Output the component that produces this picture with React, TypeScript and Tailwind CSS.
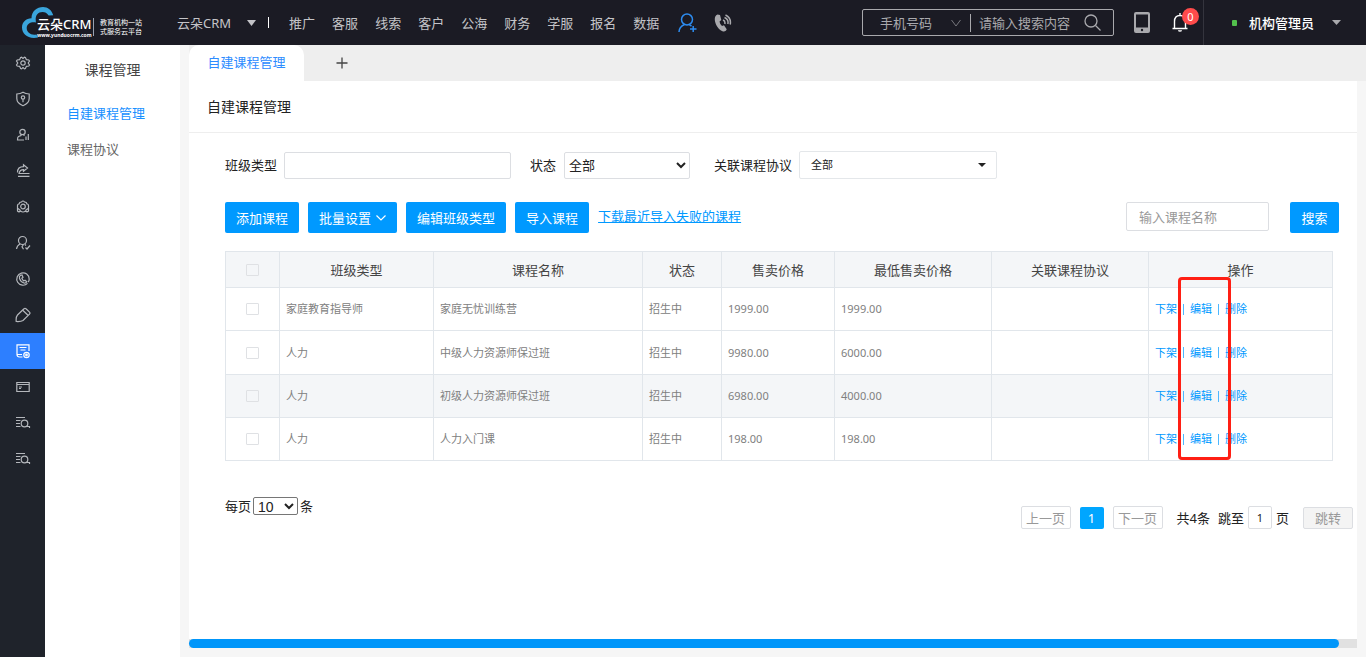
import React, { useState } from "react";

interface ICourse {
  type: string;
  name: string;
  status: string;
  price: string;
  minPrice: string;
  agreement: string;
}

const navItems = ["推广", "客服", "线索", "客户", "公海", "财务", "学服", "报名", "数据"];

const courses: ICourse[] = [
  { type: "家庭教育指导师", name: "家庭无忧训练营", status: "招生中", price: "1999.00", minPrice: "1999.00", agreement: "" },
  { type: "人力", name: "中级人力资源师保过班", status: "招生中", price: "9980.00", minPrice: "6000.00", agreement: "" },
  { type: "人力", name: "初级人力资源师保过班", status: "招生中", price: "6980.00", minPrice: "4000.00", agreement: "" },
  { type: "人力", name: "人力入门课", status: "招生中", price: "198.00", minPrice: "198.00", agreement: "" },
];

const columns = ["班级类型", "课程名称", "状态", "售卖价格", "最低售卖价格", "关联课程协议", "操作"];

const listSearchIcon = (
  <>
    <path d="M1 2.500h9M1 5.500h4.500M1 8.500h4M1 11.500h4.500" />
    <circle cx="9.500" cy="8.500" r="3.300" />
    <path d="M11.500 11.500h3v1.500" />
  </>
);

const sideIcons = [
  {
    label: "设置",
    icon: (
      <>
        <path d="M5.600 2.500l1-.3 1.400 1.200 1.400-1.200 1 .3 1 2.200 2.400.3.700 1-1.300 2 1.300 2-.7 1-2.400.3-1 2.200-1 .3L8 12.600l-1.400 1.200-1-.3-1-2.200-2.400-.3-.7-1 1.300-2-1.300-2 .7-1 2.400-.3z" />
        <circle cx="8" cy="8" r="2.200" />
      </>
    ),
  },
  {
    label: "安全",
    icon: (
      <>
        <path d="M8 1.300c2 1.300 4 1.700 6.200 1.700v4.500c0 3.300-2.500 5.700-6.200 7.200-3.700-1.500-6.200-3.900-6.200-7.200V3C4 3 6 2.600 8 1.300z" />
        <circle cx="8" cy="6.500" r="1.700" />
        <path d="M8 8.200v3" />
      </>
    ),
  },
  {
    label: "人员",
    icon: (
      <>
        <circle cx="7.500" cy="5" r="2.700" />
        <path d="M6 7.500v1L3.500 9.500q-1 .5-1 3.500H9M9 7.500v1.500M11 9.500v3.500M13.300 7v6" />
      </>
    ),
  },
  {
    label: "转介",
    icon: (
      <>
        <path d="M2.500 9.500C2.500 5.500 5 3.700 8.500 3.700V1.800l4 3.200-4 3.200V6.600C6 6.600 4.500 8 4 10.500h10.500M3 13.300h11.500" />
      </>
    ),
  },
  {
    label: "配置",
    icon: (
      <>
        <path d="M2.500 12V6.500q0-1.500 1.500-1.500Q4.500 2.800 6.500 3 8 1 9.500 3q2-.2 2.500 2 1.500 0 1.500 1.500V12q-1.500 1.500-3 0-2.500 2-5 0-1.500 1.500-3 0z" />
        <circle cx="8" cy="7.500" r="2.300" />
        <path d="M3 9.500l2.500 2M13 9.500l-2.500 2" />
      </>
    ),
  },
  {
    label: "客户",
    icon: (
      <>
        <circle cx="7.500" cy="5.500" r="4" />
        <path d="M5 9q-3 1.500-3.500 5M8.500 9.500l-1.500 2.200 1.500 2.500M10.500 12.500l1.500 1.500 3-3.500M10 9.500l1 1" />
      </>
    ),
  },
  {
    label: "通话",
    icon: (
      <>
        <path d="M12.500 12.300A6.200 6.200 0 1 1 14.200 8q0 2-1 3" />
        <path d="M5.500 4.300q-1.500 1-1 3 1 3.500 4.500 4.700 2 .3 2.800-1.300L10 9.200l-1.200.7Q7.300 9 6.800 7.200L8 6.300 7 4z" />
      </>
    ),
  },
  {
    label: "编辑",
    icon: (
      <>
        <path d="M9 1.800q1-1 2 0l3.500 3.300q1 1 0 2L8 13.500q-2 1.300-6.800 1Q.8 9.800 2.500 8z" />
        <path d="M7.700 3.200l5.300 5" />
      </>
    ),
  },
  {
    label: "课程管理",
    icon: (
      <>
        <path d="M7.500 14H4.500q-2.500 0-2.500-2.500V1.800h12V8M2.500 11.500H7" />
        <path d="M4.500 4.500h7M5.500 7h5" />
        <circle cx="11.500" cy="12" r="2.700" />
        <circle cx="11.500" cy="12" r=".8" />
      </>
    ),
  },
  {
    label: "卡片",
    icon: (
      <>
        <path d="M1.800 3.500h12.400v9H1.800zM2 5.500h12" />
        <path d="M4 8h3M4 9.500h2" />
      </>
    ),
  },
  { label: "查询", icon: listSearchIcon },
  { label: "记录", icon: listSearchIcon },
];

const Logo = () => (
  <a href="#" aria-label="云朵CRM" className="relative flex h-[45px] w-[120px] items-center text-white">
    <svg width="38" height="34" viewBox="0 0 38 34" className="absolute left-0 top-[6px]" fill="#3aa5dc">
      <path d="M16 31.500C6 33.500 0 28 0 21.500 0 16 4 12.500 9.500 12.200 9.500 5 15 1 21 1c5 0 8.500 3 10.300 8.300l-4.600.3C25 7 23 6 20.500 6c-4.500 0-7 3.500-6.800 7.500l.2 3C9.500 15.500 4.700 17.500 4.700 22c0 4.500 4.300 7.500 9.500 6.500z" />
    </svg>
    <div className="relative ml-[15px] mt-2 w-[56px] whitespace-nowrap">
      <div className="text-[13px] font-medium leading-[16px]">云朵CRM</div>
      <div className="text-[5px] font-bold leading-[6px]">www.yunduocrm.com</div>
    </div>
    <div className="mt-2 border-l border-gray-400 pl-[6px] text-[7px] leading-[9px] whitespace-nowrap">
      教育机构一站
      <br />
      式服务云平台
    </div>
  </a>
);

const Header = () => {
  return (
    <header className="flex h-[45px] shrink-0 items-center bg-[#1b1b24] pl-[22px] text-[#c4c4c8]">
      <Logo />
      <button className="ml-[35px] flex items-center whitespace-nowrap">
        云朵CRM
        <svg width="9" height="6" viewBox="0 0 9 6" className="ml-4" fill="currentColor">
          <path d="M0 0h9L4.500 6z" />
        </svg>
      </button>
      <span className="ml-3 h-[11px] w-px bg-white" />
      <nav className="ml-5 flex items-center gap-[17px] whitespace-nowrap">
        {navItems.map((item) => (
          <a key={item} href="#">
            {item}
          </a>
        ))}
        <a href="#" aria-label="添加客户" className="ml-0.5 text-[#2d8cf0]">
          <svg width="19" height="20" viewBox="0 0 19 20" fill="none" stroke="currentColor" strokeWidth="1.500">
            <circle cx="9" cy="6.500" r="5.500" />
            <path d="M1 19q0-5 5.500-7.500M11.500 11.800l2 1.200M12 16h6.500M15.200 13v6" />
          </svg>
        </a>
        <a href="#" aria-label="电话">
          <svg width="18" height="19" viewBox="0 0 18 19" fill="none" stroke="#a9a9ad" strokeWidth="1.500">
            <path
              d="M3.500 1.500Q.5 2.500.8 7c.5 5 3.700 9.500 7.700 11.300 2.500.7 4-.8 4.200-2L10 12.300l-2 .7Q5.800 11 5.500 8.500L7.300 7 6 2z"
              fill="#a9a9ad"
              stroke="none"
            />
            <path d="M9 7q2.500 1 1.800 4M10.500 4.500q4.500 2 3.300 6.500M11.500 2q6 3 4.700 9.500" />
          </svg>
        </a>
      </nav>

      <form className="ml-auto flex h-[27px] w-[252px] items-center rounded-xs border border-[#a9a9ad] text-[#a9a9ad]" onSubmit={(event) => event.preventDefault()}>
        <select aria-label="搜索类型" className="w-[72px] appearance-none pl-[17px] leading-5">
          <option>手机号码</option>
        </select>
        <svg width="10" height="8" viewBox="0 0 10 8" className="ml-4" fill="none" stroke="#77777d">
          <path d="M.5 1L5 7l4.500-6" />
        </svg>
        <span className="ml-[9px] h-[18px] w-px bg-[#a9a9ad]" />
        <input
          aria-label="搜索内容"
          placeholder="请输入搜索内容"
          className="ml-2 w-[96px] leading-5 outline-none placeholder:text-[#a9a9ad]"
        />
        <button aria-label="搜索" className="ml-[9px]">
          <svg width="17" height="17" viewBox="0 0 17 17" fill="none" stroke="currentColor" strokeWidth="1.300">
            <circle cx="7" cy="7" r="6" />
            <path d="M11.500 11.500l5 5" />
          </svg>
        </button>
      </form>

      <a href="#" aria-label="手机端" className="ml-5">
        <svg width="16" height="21" viewBox="0 0 16 21">
          <path d="M2 0h12q2 0 2 2v17q0 2-2 2H2q-2 0-2-2V2Q0 0 2 0zM2 2.500v13h12v-13z" fill="#a9a9ad" fillRule="evenodd" />
          <circle cx="8" cy="18" r="1.200" fill="#1b1b24" />
        </svg>
      </a>
      <button aria-label="消息" className="relative ml-[22px] mr-[15px]">
        <svg width="16" height="20" viewBox="0 0 16 20" fill="none" stroke="#fff" strokeWidth="1.400">
          <path d="M.5 15.500h15M2.500 15V8.500q0-6 5.500-6t5.500 6V15M8 2.500V0M6.300 17.500q1.700 1 3.400 0" />
        </svg>
        <span className="absolute -top-[5px] left-[10px] h-[17px] w-[17px] rounded-full bg-[#ff4b4b] text-center text-[11px] leading-[17px] text-white">0</span>
      </button>
      <div className="flex h-[45px] w-[163px] items-center border-l border-[#34343d] pl-7 text-white">
        <span className="h-[6px] w-[5px] rounded-[1px] bg-[#52c14c]" />
        <button className="ml-3 flex items-center font-medium whitespace-nowrap">
          机构管理员
          <svg width="9" height="5" viewBox="0 0 9 5" className="ml-[18px]" fill="#a9a9ad">
            <path d="M0 0h9L4.500 5z" />
          </svg>
        </button>
      </div>
    </header>
  );
};

const Sidebar = () => (
  <nav className="w-[45px] shrink-0 bg-[#1f232b]">
    {sideIcons.map((item, index) => (
      <a
        key={item.label}
        href="#"
        aria-label={item.label}
        className={
          index === 8
            ? "flex h-9 items-center justify-center bg-[#2d7fff] text-white"
            : "flex h-9 items-center justify-center text-[#b4b7bc]"
        }
      >
        <svg width="16" height="16" viewBox="0 0 16 16" fill="none" stroke="currentColor" strokeWidth="1.200">
          {item.icon}
        </svg>
      </a>
    ))}
  </nav>
);

const SubMenu = () => (
  <aside className="w-[135px] shrink-0 bg-white">
    <h2 className="text-center text-[14px] leading-[50px] text-[#444]">课程管理</h2>
    <a href="#" className="block pl-[22px] leading-9 text-[#1890ff]">
      自建课程管理
    </a>
    <a href="#" className="block pl-[22px] leading-9 text-[#666]">
      课程协议
    </a>
  </aside>
);

const Filters = () => (
  <div className="flex items-center pl-9 pt-[18px]">
    <label htmlFor="classType" className="mr-[7px]">
      班级类型
    </label>
    <input id="classType" type="text" className="mr-[19px] h-[27px] w-[227px] rounded-xs border border-[#dcdee2] px-2" />
    <label htmlFor="status" className="mr-2">
      状态
    </label>
    <select id="status" className="mr-6 h-[27px] w-[126px] rounded-xs border border-[#dcdee2] bg-white">
      <option>全部</option>
      <option>招生中</option>
    </select>
    <label htmlFor="agreement" className="mr-[7px]">
      关联课程协议
    </label>
    <div className="relative">
      <select id="agreement" className="h-[28px] w-[198px] appearance-none rounded-xs border border-[#e4e7ea] bg-white pl-[11px] text-[11px]">
        <option>全部</option>
      </select>
      <svg width="8" height="4" viewBox="0 0 8 4" className="pointer-events-none absolute right-[11px] top-3" fill="#222">
        <path d="M0 0h8L4 4z" />
      </svg>
    </div>
  </div>
);

const Toolbar = () => (
  <div className="mt-[23px] flex items-start gap-[9px] pl-9 pr-[18px]">
    <button className="h-[31px] rounded-xs bg-[#0099ff] px-[11px] text-white">添加课程</button>
    <button className="flex h-[31px] items-center rounded-xs bg-[#0099ff] px-[11px] text-white">
      批量设置
      <svg width="10" height="6" viewBox="0 0 10 6" className="ml-[5px]" fill="none" stroke="currentColor" strokeWidth="1.200">
        <path d="M.5.5L5 5 9.500.5" />
      </svg>
    </button>
    <button className="h-[31px] rounded-xs bg-[#0099ff] px-[11px] text-white">编辑班级类型</button>
    <button className="h-[31px] rounded-xs bg-[#0099ff] px-[11px] text-white">导入课程</button>
    <a href="#" className="leading-7 text-[#0099ff] underline">
      下载最近导入失败的课程
    </a>
    <input
      aria-label="课程名称"
      placeholder="输入课程名称"
      className="ml-auto h-[29px] w-[143px] rounded-xs border border-[#dcdee2] px-3 placeholder:text-[#999]"
    />
    <button className="ml-3 h-[31px] w-[49px] rounded-xs bg-[#0099ff] text-white">搜索</button>
  </div>
);

const Checkbox = ({ label }: { label: string }) => (
  <input
    type="checkbox"
    aria-label={label}
    className="mx-auto block h-[12px] w-[13px] appearance-none rounded-[1px] border border-[#dfe1e4] checked:bg-[#0099ff]"
  />
);

const CourseTable = () => (
  <div className="relative ml-9 mr-6 mt-[18px]">
    <table className="w-full table-fixed border-collapse">
      <colgroup>
        <col className="w-[54px]" />
        <col className="w-[154px]" />
        <col className="w-[209px]" />
        <col className="w-[79px]" />
        <col className="w-[113px]" />
        <col className="w-[157px]" />
        <col className="w-[157px]" />
        <col />
      </colgroup>
      <thead>
        <tr className="h-9 bg-[#f4f6f8] text-[#444]">
          <th className="border border-[#e1e6eb]">
            <Checkbox label="全选" />
          </th>
          {columns.map((column) => (
            <th key={column} className="border border-[#e1e6eb] font-normal">
              {column}
            </th>
          ))}
        </tr>
      </thead>
      <tbody className="text-[11px] text-[#808080]">
        {courses.map((course, index) => (
          <tr key={course.name} className={index === 2 ? "h-[43px] bg-[#f4f6f8]" : index === 1 ? "h-11" : "h-[43px]"}>
            <td className="border border-[#e1e6eb]">
              <Checkbox label={course.name} />
            </td>
            <td className="border border-[#e1e6eb] px-[6px]">{course.type}</td>
            <td className="border border-[#e1e6eb] px-[6px]">{course.name}</td>
            <td className="border border-[#e1e6eb] px-[6px]">{course.status}</td>
            <td className="border border-[#e1e6eb] px-[6px]">{course.price}</td>
            <td className="border border-[#e1e6eb] px-[6px]">{course.minPrice}</td>
            <td className="border border-[#e1e6eb] px-[6px]">{course.agreement}</td>
            <td className="border border-[#e1e6eb] px-[6px] text-[#0099ff]">
              <div className="flex items-center gap-[6px]">
                <a href="#">下架</a>
                <span className="h-[11px] w-px bg-[#4db8ff]" />
                <a href="#">编辑</a>
                <span className="h-[11px] w-px bg-[#4db8ff]" />
                <a href="#">删除</a>
              </div>
            </td>
          </tr>
        ))}
      </tbody>
    </table>
    {/* highlight around the edit links */}
    <div className="pointer-events-none absolute right-[102px] top-[26px] h-[183px] w-[53px] rounded-sm border-[3px] border-[#ff1f14]" />
  </div>
);

const Pagination = () => {
  const [page, setPage] = useState("1");

  return (
    <div className="mt-[35px] flex items-start justify-between pl-9 pr-1">
      <label className="flex items-center gap-[2px]">
        每页
        <select className="h-[18px] w-[45px] rounded-xs border border-[#767676] bg-white font-['Liberation_Sans',sans-serif] text-[14px] leading-4">
          <option>10</option>
          <option>20</option>
        </select>
        条
      </label>
      <div className="mt-[10px] flex items-center whitespace-nowrap">
        <button className="h-[23px] w-[50px] rounded-xs border border-[#dcdee2] text-[#999]">上一页</button>
        <button className="mx-[9px] h-[22px] w-6 rounded-xs bg-[#00a6ff] text-white">1</button>
        <button className="h-[23px] w-[50px] rounded-xs border border-[#dcdee2] text-[#999]">下一页</button>
        <span className="ml-[14px] mr-2">共4条</span>
        <label className="flex items-center gap-1">
          跳至
          <input
            value={page}
            onChange={(event) => setPage(event.target.value)}
            className="h-[23px] w-6 rounded-xs border border-[#dcdee2] text-center text-[11px]"
          />
          页
        </label>
        <button className="ml-[14px] h-[22px] w-[50px] rounded-xs border border-[#dcdee2] bg-[#f4f4f4] text-[#999]">跳转</button>
      </div>
    </div>
  );
};

const App = () => {
  return (
    <div className="flex min-h-screen flex-col bg-[#f6f6f6] font-['Noto_Sans','Noto_Sans_CJK_SC',sans-serif] text-[13px] leading-5 text-[#222]">
      <Header />
      <div className="flex flex-1">
        <Sidebar />
        <SubMenu />
        <div className="ml-[9px] flex min-w-0 flex-1 flex-col">
          <div className="flex h-9 items-center bg-[#eee]">
            <a href="#" className="h-9 w-[115px] rounded-t-[10px] bg-white text-center leading-[34px] text-[#2d8cff]">
              自建课程管理
            </a>
            <button aria-label="新建标签" className="ml-8 text-[#444]">
              <svg width="12" height="12" viewBox="0 0 12 12" fill="none" stroke="currentColor" strokeWidth="1.300">
                <path d="M6 .5v11M.5 6h11" />
              </svg>
            </button>
          </div>
          <main className="mb-[9px] mr-[9px] flex flex-1 flex-col bg-white">
            <h1 className="border-b border-[#eee] pl-[18px] text-[14px] leading-[51px]">自建课程管理</h1>
            <Filters />
            <Toolbar />
            <CourseTable />
            <Pagination />
            <div className="mt-auto bg-[#e1e1e1] pr-[18px]">
              <div className="h-[9px] rounded-full bg-[#0096fa]" />
            </div>
          </main>
        </div>
      </div>
    </div>
  );
};

export default App;
